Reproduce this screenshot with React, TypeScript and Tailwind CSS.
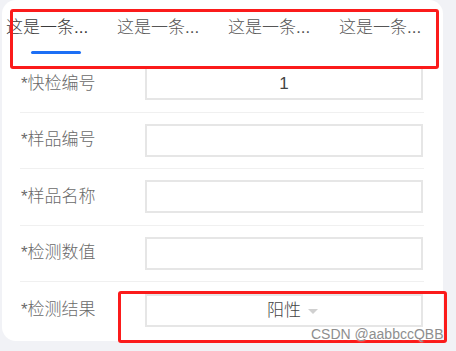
const tabs = ["这是一条...", "这是一条...", "这是一条...", "这是一条..."];

const rows = [
  { label: "*快检编号", value: "1" },
  { label: "*样品编号", value: "" },
  { label: "*样品名称", value: "" },
  { label: "*检测数值", value: "" },
  { label: "*检测结果", value: "阳性", select: true },
];

export default function App() {
  return (
    <div
      className="relative h-[351px] w-[456px] overflow-hidden bg-[#f1f2f6] font-light"
      style={{ fontFamily: '"Liberation Sans", "Noto Sans CJK SC", sans-serif' }}
    >
      {/* Card */}
      <div className="ml-[2px] h-[341px] w-[441px] overflow-hidden rounded-[14px] bg-white">
        {/* Tabs */}
        <div className="flex h-[56px] overflow-hidden pl-[4px]">
          {tabs.map((t, i) => (
            <div key={i} className="w-[111px] shrink-0 pt-[16px]">
              <div
                className={`text-[17px] leading-[24px] whitespace-nowrap ${
                  i === 0 ? "text-[#3a3a3a]" : "text-[#555]"
                }`}
              >
                {t}
              </div>
              {i === 0 && (
                <div className="ml-[25px] mt-[11px] h-[3px] w-[50px] rounded-full bg-[#1d6ff5]" />
              )}
            </div>
          ))}
        </div>

        {/* Form rows */}
        <div className="ml-[18px] mr-[19px]">
          {rows.map((r, i) => (
            <div
              key={i}
              className={`flex h-[56.5px] items-center px-[1px] ${
                i < rows.length - 1 ? "border-b border-[#f0f0f0]" : ""
              }`}
            >
              <div className="w-[124px] text-[17px] leading-[22px] text-[#6a6a6a]">
                {r.label}
              </div>
              <div className="flex h-[33px] flex-1 items-center justify-center gap-[7px] border-2 border-[#e6e6e6] text-[17px] text-[#444]">
                {r.select && <span className="w-[10px]" />}
                <span>{r.value}</span>
                {r.select && (
                  <span className="mt-[2px] h-0 w-0 border-x-[5px] border-t-[5px] border-x-transparent border-t-[#d0d0d0]" />
                )}
              </div>
            </div>
          ))}
        </div>
      </div>

      {/* Red highlight boxes */}
      <div className="absolute left-[10px] top-[9px] h-[60px] w-[429px] rounded-[3px] border-[3px] border-[#fb1b1b]" />
      <div className="absolute left-[118px] top-[291px] h-[52px] w-[329px] rounded-[3px] border-[3px] border-[#fb1b1b]" />

      {/* Watermark */}
      <div
        className="absolute left-[311px] top-[326px] text-[14px] leading-[16px] text-[#8e8e8e]"
        style={{ textShadow: "0 0 2px #fff" }}
      >
        CSDN @aabbccQBB
      </div>
    </div>
  );
}
